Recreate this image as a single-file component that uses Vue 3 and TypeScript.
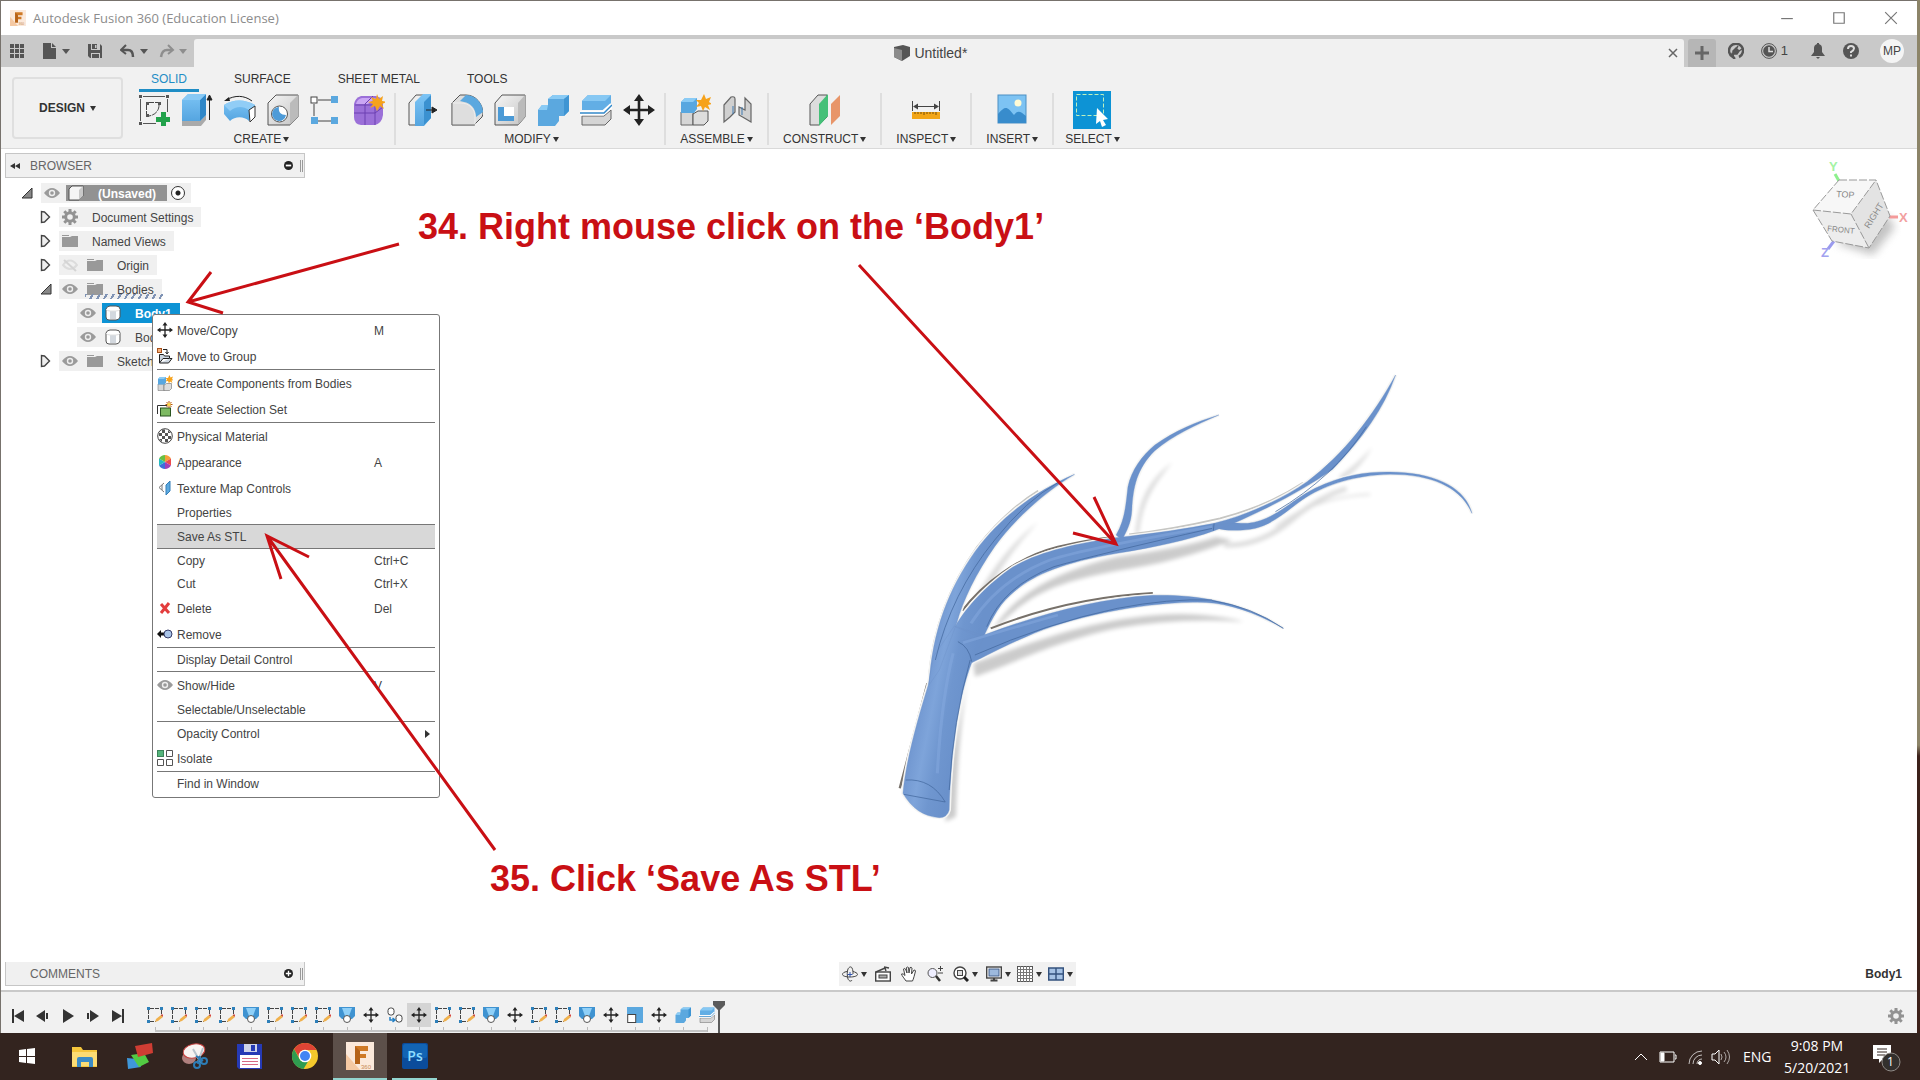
<script setup lang="ts">
import { ref } from 'vue'

interface ToolGroup { label: string; icons: string[]; wide?: boolean }
interface TreeRow { label: string; level: number; arrow?: 'open' | 'closed'; eye?: 'on' | 'off'; icon: string; kind?: 'root' | 'selected' | 'hatched' }
interface MenuRow { label: string; icon?: string; key?: string; sep?: boolean; sub?: boolean; tall?: boolean; active?: boolean }

const tabs = ['SOLID', 'SURFACE', 'SHEET METAL', 'TOOLS']
const activeTab = ref('SOLID')
const workMode = ref('root')

const groups: ToolGroup[] = [
  { label: 'CREATE', icons: ['sketch', 'extrude', 'revolve', 'hole', 'pattern', 'form'], wide: true },
  { label: 'MODIFY', icons: ['press', 'fillet', 'shell', 'combine', 'split', 'move'], wide: true },
  { label: 'ASSEMBLE', icons: ['component', 'joint'] },
  { label: 'CONSTRUCT', icons: ['plane'] },
  { label: 'INSPECT', icons: ['measure'] },
  { label: 'INSERT', icons: ['picture'] },
  { label: 'SELECT', icons: ['select'] },
]

const tree: TreeRow[] = [
  { label: '(Unsaved)', level: 0, arrow: 'open', eye: 'on', icon: 'box', kind: 'root' },
  { label: 'Document Settings', level: 1, arrow: 'closed', icon: 'gear' },
  { label: 'Named Views', level: 1, arrow: 'closed', icon: 'folder' },
  { label: 'Origin', level: 1, arrow: 'closed', eye: 'off', icon: 'folder' },
  { label: 'Bodies', level: 1, arrow: 'open', eye: 'on', icon: 'folder', kind: 'hatched' },
  { label: 'Body1', level: 2, eye: 'on', icon: 'body', kind: 'selected' },
  { label: 'Body2', level: 2, eye: 'on', icon: 'body' },
  { label: 'Sketches', level: 1, arrow: 'closed', eye: 'on', icon: 'folder' },
]

const menu: MenuRow[] = [
  { label: 'Move/Copy', icon: 'move', key: 'M', tall: true },
  { label: 'Move to Group', icon: 'group', tall: true, sep: true },
  { label: 'Create Components from Bodies', icon: 'component', tall: true },
  { label: 'Create Selection Set', icon: 'selset', tall: true, sep: true },
  { label: 'Physical Material', icon: 'material', tall: true },
  { label: 'Appearance', icon: 'wheel', key: 'A', tall: true },
  { label: 'Texture Map Controls', icon: 'texture', tall: true },
  { label: 'Properties', sep: true },
  { label: 'Save As STL', sep: true, active: true },
  { label: 'Copy', key: 'Ctrl+C' },
  { label: 'Cut', key: 'Ctrl+X' },
  { label: 'Delete', icon: 'delete', key: 'Del', tall: true },
  { label: 'Remove', icon: 'remove', tall: true, sep: true },
  { label: 'Display Detail Control', sep: true },
  { label: 'Show/Hide', icon: 'eye', key: 'V', tall: true },
  { label: 'Selectable/Unselectable', sep: true },
  { label: 'Opacity Control', sub: true },
  { label: 'Isolate', icon: 'isolate', tall: true, sep: true },
  { label: 'Find in Window' },
]

const playback = ['first', 'prev', 'play', 'next', 'last']
const timeline = [
  'tsketch', 'tsketch', 'tsketch', 'tsketch', 'loft', 'tsketch', 'tsketch', 'tsketch', 'loft', 'move', 'tcopy', 'move',
  'tsketch', 'tsketch', 'loft', 'move', 'tsketch', 'tsketch', 'loft', 'move', 'scale', 'move', 'combine', 'split',
]
const navTools = [
  { icon: 'orbit', caret: true }, { icon: 'look', caret: false }, { icon: 'hand', caret: false }, { icon: 'zoom', caret: false },
  { icon: 'fit', caret: true }, { icon: 'display', caret: true }, { icon: 'gridset', caret: true }, { icon: 'views', caret: true },
]
const apps = ['start', 'explorer', 'blocks', 'snip', 'floppy', 'chrome', 'fusion', 'ps']
</script>

<template>
  <div class="desktop">
    <svg class="sprite" aria-hidden="true">
      <defs>
        <linearGradient id="gBlue" x1="0" y1="0" x2="0" y2="1"><stop offset="0" stop-color="#7cc4f5" /><stop offset="1" stop-color="#55a5e0" /></linearGradient>
        <linearGradient id="gGrey" x1="0" y1="0" x2="1" y2="1"><stop offset="0" stop-color="#f6f6f6" /><stop offset="1" stop-color="#c4c4c4" /></linearGradient>
        <linearGradient id="gTrunk" gradientUnits="userSpaceOnUse" x1="80" y1="1100" x2="200" y2="1120"><stop offset="0" stop-color="#6f95cf" /><stop offset=".35" stop-color="#7ea4da" /><stop offset=".65" stop-color="#6f96cf" /><stop offset="1" stop-color="#6a91cb" /></linearGradient>
        <symbol id="i-sketch" viewBox="0 0 32 32"><path d="M2.500 5v22M29.500 5v13M5 2.500h22M5 29.500h13" stroke="#555" /><path d="M10 8.500h10M8.500 10v10M21 11c0 6-4 10-10 11" fill="none" stroke="#444" stroke-dasharray="6 1" /><path d="M1 1h3v3H1zM28 1h3v3h-3zM1 28h3v3H1zM8 8h3v3H8zM20 8h3v3h-3zM8 20h3v3H8z" fill="#555" /><path d="M23 18h5v5h5v5h-5v5h-5v-5h-5v-5h5z" fill="#22a24b" /></symbol>
        <symbol id="i-extrude" viewBox="0 0 32 32"><path d="M1 27h18l6-6v5l-5 6H1z" fill="#aaa" /><path d="M1 6l6-6h18v21l-6 6H1z" fill="url(#gBlue)" /><path d="M19 6l6-6v21l-6 6z" fill="#2f87c8" /><path d="M1 6l6-6h18l-6 6z" fill="#88c9f5" /><path d="M28.500 26V3M26 6l2.500-5 2.500 5z" stroke="#222" fill="#222" /></symbol>
        <symbol id="i-revolve" viewBox="0 0 32 32"><path d="M0 11c9-6 21-6 31 0l-1 10-5 6c-5-5-14-5-19 0l-6-7z" fill="url(#gBlue)" /><path d="M0 11c9-6 21-6 31 0l-6 5c-6-4-13-4-19 1z" fill="#91cdf6" /><path d="M25 16l6-4v11l-5 5z" fill="#fff" stroke="#333" /><path d="M28 7C20 1 11 1 2 6" fill="none" stroke="#222" /><path d="M0 7l5-4 1 4z" fill="#222" /></symbol>
        <symbol id="i-hole" viewBox="0 0 32 32"><path d="M1 9l8-8h22v22l-8 8H1z" fill="url(#gGrey)" stroke="#555" /><path d="M23 9l8-8v22l-8 8z" fill="#bbb" /><circle cx="12.500" cy="20" r="8" fill="#fff" stroke="#555" /><path d="M12 13a7 7 0 107 8c-5 0-8-3-7-8z" fill="#4d9bd8" /></symbol>
        <symbol id="i-pattern" viewBox="0 0 32 32"><path d="M8 6h13M4 10v12M8 27h13" stroke="#444" /><rect x="1" y="3" width="6" height="6" fill="#fff" stroke="#444" /><path d="M21 2h7v7h-7zM1 23h7v7H1zM21 23h7v7h-7z" fill="#5ba8df" /></symbol>
        <symbol id="i-form" viewBox="0 0 32 32"><path d="M1 10q1-6 7-8h15q7 2 7 9v10q-1 8-8 10H8q-7-1-7-8z" fill="#9b70d8" /><path d="M3 10q1-5 6-6h14L15 10z" fill="#caa6f4" /><path d="M1 19h21l8-6M12 31V10l8-8M22 10v21M2 11h20l7-5" fill="none" stroke="#6d40b2" /><path d="M24 0l2 5 4-3-1 5 5 1-5 2 2 5-4-3-3 5-2-5-5 2 3-4-5-2 5-1-2-4 5 2z" fill="#f6a21b" /></symbol>
        <symbol id="i-press" viewBox="0 0 32 32"><path d="M1 9l7-8h8v22l-7 8H1z" fill="#eee" stroke="#555" /><path d="M7 8l8-8h8v24l-7 8H7z" fill="url(#gBlue)" /><path d="M16 8l7-7v23l-7 7z" fill="#3b91d0" /><path d="M18 16h8M24 13l5 3-5 3z" fill="#222" stroke="#222" /></symbol>
        <symbol id="i-fillet" viewBox="0 0 32 32"><path d="M1 9l8-8h6c10 0 17 9 17 19l-1 3-8 8H1z" fill="#ddd" stroke="#555" /><path d="M15 1c10 0 17 9 17 17l-7 5c0-9-6-14-12-15L9 7z" fill="#5ba8df" /><path d="M1 9h9c8 0 14 6 14 14v8H1z" fill="#dedede" stroke="#eee" /><path d="M1 9v22h23" fill="none" stroke="#666" /></symbol>
        <symbol id="i-shell" viewBox="0 0 32 32"><path d="M1 9l7-8h23v22l-7 8H1z" fill="url(#gGrey)" stroke="#555" /><path d="M24 9l7-8v22l-7 8z" fill="#bbb" /><rect x="4" y="13" width="16" height="14" fill="#fff" /><path d="M4 13h6v9l-6 5zM10 22h10v5H4z" fill="#4b9ad6" /></symbol>
        <symbol id="i-combine" viewBox="0 0 32 32"><path d="M1 16l4-5h6V5l5-4h16v16l-5 5h-5v5l-4 5H1z" fill="#5ba8df" /><path d="M1 16l4-5h6l-1 5zM11 5l5-4h16l-5 4z" fill="#8acbf5" /><path d="M27 5l5-4v16l-5 5z" fill="#3f95d3" /></symbol>
        <symbol id="i-split" viewBox="0 0 32 32"><path d="M2 22h22l7-6v9l-6 6H2z" fill="#d5d5d5" stroke="#666" /><path d="M2 7l6-6h23v9l-7 6H2z" fill="#62aee5" /><path d="M2 7l6-6h23l-6 6z" fill="#87c8f3" /><path d="M0 19h23l9-8" fill="none" stroke="#fff" stroke-width="5" /><path d="M0 19h24l8-8" fill="none" stroke="#3489c9" stroke-width="1.500" /></symbol>
        <symbol id="i-move" viewBox="0 0 32 32"><path d="M16 5v22M5 16h22" stroke="#222" stroke-width="2.600" /><path d="M16 0l5 7H11zM16 32l5-7H11zM0 16l7-5v10zM32 16l-7-5v10z" fill="#222" /></symbol>
        <symbol id="i-component" viewBox="0 0 32 32"><path d="M2 18h12v13H2z" fill="#d6d6d6" stroke="#666" /><path d="M14 20l5-3h10v10l-4 4H14z" fill="#ddd" stroke="#555" /><path d="M2 8l4-4h12v11l-3 4H2z" fill="#58a7e0" /><path d="M2 8l4-4h12l-4 4z" fill="#8acbf5" /><path d="M25 0l2 5 5-2-2 5 3 2-4 1 2 5-5-3-2 4-2-5-5 1 3-4-3-3 5 0z" fill="#f6a21b" /></symbol>
        <symbol id="i-joint" viewBox="0 0 32 32"><path d="M2 11l7-8q4-1 4 2v13l-5 5-6 5zM29 28l-5-3-7-4V13l6 3V4l6 6z" fill="#d0d0d0" stroke="#666" stroke-width="1.200" /><path d="M11 12v8M20 13v8" stroke="#3c78b0" /></symbol>
        <symbol id="i-plane" viewBox="0 0 32 32"><path d="M1 10l8-9h9v22l-8 8H1z" fill="#ddd" stroke="#555" /><path d="M10 10l9-10v22l-9 10z" fill="#45c078" /><path d="M22 10l9-9v21l-9 9z" fill="#e89569" /></symbol>
        <symbol id="i-measure" viewBox="0 0 32 32"><path d="M2.500 7v10M29.500 7v10M4 12.500h24" stroke="#444" /><path d="M3 12.500l5-3v6zM29 12.500l-5-3v6z" fill="#444" /><rect x="2" y="18" width="28" height="7" fill="#f2a516" /><path d="M5 18v2M8 18v2M11 18v2M14 18v3M17 18v2M20 18v2M23 18v2M26 18v3" stroke="#754c05" /></symbol>
        <symbol id="i-picture" viewBox="0 0 32 32"><rect x="2" y="1" width="28" height="28" fill="#7dc3f3" stroke="#4c90c3" /><path d="M2 20c8-9 9-7 16 1 4-5 6-4 12 1v7H2z" fill="#388ccc" /><circle cx="22" cy="9" r="3.500" fill="#fffbd5" /></symbol>
        <symbol id="i-select" viewBox="0 0 38 38"><rect width="38" height="38" fill="#0d93d5" /><rect x="3.500" y="3.500" width="27" height="21" fill="none" stroke="#bff0bd" stroke-dasharray="4 2" /><path d="M24 17l11 11-5 1 3 5-4 2-2-6-4 3z" fill="#fff" /></symbol>
        <symbol id="i-eye" viewBox="0 0 16 16"><path d="M0 8q8-10 16 0-8 10-16 0z" fill="#9b9b9b" /><circle cx="8" cy="8" r="3.200" fill="#eee" /><circle cx="8" cy="8" r="1.800" fill="#999" /></symbol>
        <symbol id="i-eyeoff" viewBox="0 0 16 16"><path d="M1 8q7-9 14 0-7 8-14 0z" fill="none" stroke="#dcdcdc" stroke-width="2" /><path d="M2 3l12 11" stroke="#d4d4d4" stroke-width="2" /></symbol>
        <symbol id="i-box" viewBox="0 0 16 16"><path d="M1 4l3-3h11v10l-4 4H1z" fill="#f5f5f5" stroke="#555" /><path d="M11 5l4-4v10l-4 4z" fill="#c9c9c9" /></symbol>
        <symbol id="i-gear" viewBox="0 0 16 16"><circle cx="8" cy="8" r="4.300" fill="none" stroke="#929292" stroke-width="3" /><path d="M8 0v3M8 13v3M0 8h3M13 8h3M2.300 2.300l2 2M11.700 11.700l2 2M13.700 2.300l-2 2M4.300 11.700l-2 2" stroke="#929292" stroke-width="3" /></symbol>
        <symbol id="i-folder" viewBox="0 0 16 16"><path d="M0 2h7v1H0zM0 4h8l2-1h6v11H0z" fill="#999" /></symbol>
        <symbol id="i-body" viewBox="0 0 16 16"><path d="M1 4q1-3 4-3h6q4 0 4 3v8q-1 3-4 3H4q-3 0-3-3z" fill="#fff" stroke="#555" /><path d="M5 6h6v8H5z" fill="#d3d8de" /><path d="M1 4q1 2 4 2h6q3 0 4-2" fill="none" stroke="#e0e0e0" /></symbol>
        <symbol id="i-group" viewBox="0 0 16 16"><rect x="0.500" y="0.500" width="4" height="4" fill="#f6b17a" stroke="#a8501a" /><path d="M6 1.500h4V5M8.500 4L10 6l1.500-2" fill="none" stroke="#222" /><path d="M2.500 15V6.500h4l1 1.500h5v2.500H6L2.500 15h9L15 10.500h-2" fill="#cdd6e0" stroke="#222" /></symbol>
        <symbol id="i-selset" viewBox="0 0 16 16"><path d="M.5 13V4.500H10" fill="none" stroke="#333" /><rect x="3.500" y="7" width="10" height="8" fill="#7dba62" stroke="#2a5520" /><path d="M12 0v7M8.500 3.500h7M9.500 1l5 5M14.500 1l-5 5" stroke="#b5540e" /><circle cx="12" cy="3.500" r="1.700" fill="#f9d64a" /></symbol>
        <symbol id="i-material" viewBox="0 0 16 16"><circle cx="8" cy="8" r="7.300" fill="#fff" stroke="#444" /><path d="M5 1.500h3V5H5zM2 5h3v3H2zM8 5h3v3H8zM5 8h3v3H5zM11 8h3v3h-3zM8 11h3v3H8zM11 2l3 3h-3zM2 11h3v3z" fill="#555" /></symbol>
        <symbol id="i-wheel" viewBox="0 0 16 16"><path d="M8 8V1a7 7 0 016 3.500z" fill="#f6a03b" /><path d="M8 8l6-3.500v7z" fill="#ed4c4c" /><path d="M8 8l6 3.500A7 7 0 018 15z" fill="#a13fb8" /><path d="M8 8v7a7 7 0 01-6-3.500z" fill="#3d6fdb" /><path d="M8 8l-6 3.500v-7z" fill="#26bcc0" /><path d="M8 8L2 4.500A7 7 0 018 1z" fill="#69c043" /></symbol>
        <symbol id="i-texture" viewBox="0 0 16 16"><path d="M9 5l4-4v10l-4 4z" fill="#5ba8df" stroke="#347fb8" /><path d="M7 3L2 7.500 7 12M5 5v5" fill="none" stroke="#777" /></symbol>
        <symbol id="i-delete" viewBox="0 0 16 16"><path d="M4 4l8 9M12 3l-8 10" stroke="#e33d3d" stroke-width="3" /></symbol>
        <symbol id="i-remove" viewBox="0 0 16 16"><path d="M0 8l4-4v2.500h3v3H4V12z" fill="#111" /><circle cx="11" cy="8" r="4" fill="#a9c4e8" stroke="#333a66" /></symbol>
        <symbol id="i-isolate" viewBox="0 0 16 16"><rect x=".5" y=".5" width="6" height="6" fill="#55b57b" stroke="#3b8359" /><path d="M9.500.5h6v6h-6zM.5 9.500h6v6h-6zM9.500 9.500h6v6h-6z" fill="#fff" stroke="#555" /></symbol>
        <symbol id="i-tsketch" viewBox="0 0 16 16"><path d="M3 1.500h10M1.500 3v10M14.500 3v6M3 14.500h6" stroke="#444" stroke-dasharray="4 1" /><path d="M0 0h3v3H0zM13 0h3v3h-3zM0 13h3v3H0z" fill="#2d7fb9" /><path d="M8 15l1-3 5-4 2 2-5 4z" fill="#f0b14d" /><path d="M14 8l1-1 2 2-1 1z" fill="#d64343" /></symbol>
        <symbol id="i-loft" viewBox="0 0 16 16"><path d="M0 0h16v9l-3 3H3L0 9z" fill="#3f93d1" /><path d="M3 1h10l-3 8H6z" fill="#8fd0f8" /><circle cx="8" cy="12" r="3.500" fill="#fff" stroke="#555" /></symbol>
        <symbol id="i-tcopy" viewBox="0 0 16 16"><rect x="1" y="1" width="6" height="7" rx="2.500" fill="#fff" stroke="#444" /><rect x="9" y="8" width="6" height="7" rx="2.500" fill="#fff" stroke="#444" /><path d="M3 10v3h4M5.500 11L8 13l-2.500 2" fill="none" stroke="#2380c5" stroke-width="1.500" /></symbol>
        <symbol id="i-scale" viewBox="0 0 16 16"><path d="M0 0h16v16H9V7H0z" fill="#5ba8df" /><rect x=".7" y="7.500" width="8" height="8" fill="#fff" stroke="#444" /></symbol>
        <symbol id="i-first" viewBox="0 0 16 16"><path d="M2 1h2v14H2zM14 2v12L4 8z" fill="#333" /></symbol>
        <symbol id="i-prev" viewBox="0 0 16 16"><path d="M10 2v12L1 8zM11 5h2v6h-2z" fill="#333" /></symbol>
        <symbol id="i-play" viewBox="0 0 16 16"><path d="M3 1v14l11-7z" fill="#333" /></symbol>
        <symbol id="i-next" viewBox="0 0 16 16"><path d="M5 2v12l9-6zM2 5h2v6H2z" fill="#333" /></symbol>
        <symbol id="i-last" viewBox="0 0 16 16"><path d="M12 1h2v14h-2zM2 2v12l10-6z" fill="#333" /></symbol>
        <symbol id="i-orbit" viewBox="0 0 16 16"><path d="M5 5.500C2 6 .5 7 .5 8.500S4 11 8 11s7.500-1 7.500-2.500S13 6 11 5.500" fill="none" stroke="#444" /><path d="M10 14c-1 2-3 1-4-1-1-3-1-8 0-10s3-3 4-1 1 4 1 6" fill="none" stroke="#444" /><path d="M8 6v5M5.500 8.500h5" stroke="#3355aa" /></symbol>
        <symbol id="i-look" viewBox="0 0 16 16"><rect x=".7" y="6" width="14.600" height="9" fill="#fff" stroke="#444" stroke-width="1.400" /><rect x="4" y="9" width="8" height="3" fill="#aaa" stroke="#444" /><path d="M1 6l9-4 1 3M9 1l5 1" fill="none" stroke="#444" stroke-width="1.400" /></symbol>
        <symbol id="i-hand" viewBox="0 0 16 16"><path d="M5 15C3 12 1 10 .5 8q1.500-1 3.500 1.500L2.500 3q1.500-1 2 0L6 7 5.500 1.500q1.500-1 2 0L8 7l1-5.500q1.500-.5 2 .5L10.500 8 13 4q1.500 0 1.500 1c-1 4-2 8-3 10z" fill="#fff" stroke="#444" /></symbol>
        <symbol id="i-zoom" viewBox="0 0 16 16"><circle cx="5.500" cy="7" r="4.500" fill="#eef" stroke="#555" /><path d="M9 10l4 5" stroke="#333" stroke-width="2.500" /><path d="M13.500 0v5M11 2.500h5M11 7h5" stroke="#444" /></symbol>
        <symbol id="i-fit" viewBox="0 0 16 16"><circle cx="7" cy="7" r="6" fill="#fff" stroke="#444" stroke-width="1.400" /><rect x="4.500" y="4.500" width="5" height="5" fill="#ddd" stroke="#444" /><path d="M11 11l4 4" stroke="#222" stroke-width="3" /></symbol>
        <symbol id="i-display" viewBox="0 0 16 16"><rect x=".7" y="1" width="14.600" height="11" fill="#fff" stroke="#444" stroke-width="1.400" /><rect x="3" y="3" width="10" height="7" fill="#9db9dd" stroke="#44618c" /><path d="M8 12v2M4.500 14.500h7" stroke="#444" stroke-width="2" /></symbol>
        <symbol id="i-gridset" viewBox="0 0 16 16"><rect x=".5" y=".5" width="15" height="15" fill="#fff" stroke="#555" /><path d="M3.500 0v16M6.500 0v16M9.500 0v16M12.500 0v16M0 3.500h16M0 6.500h16M0 9.500h16M0 12.500h16" stroke="#777" /></symbol>
        <symbol id="i-views" viewBox="0 0 16 16"><path d="M.7 2h14.600v12H.7zM8 2v12M1 8h14" fill="#a5c2e5" stroke="#33517d" stroke-width="1.400" /></symbol>
        <symbol id="i-start" viewBox="0 0 28 28"><path d="M6 8l7-1v7H6zM14 7l8-1v8h-8zM6 15h7v6l-7-1zM14 15h8v7l-8-1z" fill="#fff" /></symbol>
        <symbol id="i-explorer" viewBox="0 0 28 28"><path d="M1 5h9l2 3h14v17H1z" fill="#f5c63c" /><path d="M1 10h25v14H1z" fill="#fbdc74" /><path d="M6 25v-8q0-2 2-2h12q2 0 2 2v8h-4v-5h-8v5z" fill="#3b8cc6" /></symbol>
        <symbol id="i-blocks" viewBox="0 0 28 28"><path d="M1 16l10 1 4 8-13 2z" fill="#3f97d9" /><path d="M5 13l13-2 5 9-10 5z" fill="#53cb43" /><path d="M9 4l17-3 1 10-15 4z" fill="#cf3d33" /></symbol>
        <symbol id="i-snip" viewBox="0 0 28 28"><ellipse cx="8" cy="16" rx="7" ry="6" fill="#b0807e" /><ellipse cx="13" cy="9" rx="11" ry="7" fill="#f7f4f2" stroke="#c64340" transform="rotate(-12 13 9)" /><path d="M12 7l8 14M22 6l-5 14" stroke="#b9c4cc" stroke-width="2" /><path d="M15 14l7 5M19 14l-2 8" stroke="#2c7cb5" stroke-width="2" /><circle cx="16" cy="23" r="3" fill="none" stroke="#2c7cb5" stroke-width="2" /><circle cx="23" cy="19" r="3" fill="none" stroke="#2c7cb5" stroke-width="2" /></symbol>
        <symbol id="i-floppy" viewBox="0 0 28 28"><path d="M1 2h25v25H3l-2-2z" fill="#263ab5" /><path d="M8 2h13v8H8z" fill="#ced3e8" /><path d="M15 3h4v6h-4z" fill="#263ab5" /><path d="M4 13h20v13H4z" fill="#fff" /><path d="M6 16.500h16M6 19.500h16M6 22.500h16" stroke="#d76a83" /></symbol>
        <symbol id="i-chrome" viewBox="0 0 28 28"><circle cx="14" cy="14" r="13" fill="#f5c92c" /><path d="M3 7a13 13 0 0122.500 1H14a6 6 0 00-5.500 8z" fill="#de4435" /><path d="M3 7a13 13 0 009.500 20l6-10a6 6 0 01-10 0z" fill="#2f9c50" /><circle cx="14" cy="14" r="6.300" fill="#fff" /><circle cx="14" cy="14" r="5" fill="#4285f4" /></symbol>
        <symbol id="i-fusion" viewBox="0 0 28 28"><rect width="28" height="28" fill="#fbe9db" /><path d="M0 28V12l14 16z" fill="#f5c9a3" /><path d="M9 22V4h13v5h-8v3h6v4h-6v6z" fill="#cf7a26" /><path d="M9 4l5 5v13H9z" fill="#b5631a" /><text x="15" y="27" font-family="Liberation Sans, sans-serif" font-size="6" fill="#c98a55">360</text></symbol>
        <symbol id="i-ps" viewBox="0 0 28 28"><rect x="1" y="1" width="26" height="26" rx="2" fill="#0b4c9b" /><rect x="2" y="2" width="24" height="14" rx="2" fill="#1874c5" opacity=".6" /><text x="14" y="19" text-anchor="middle" font-family="Open Sans, sans-serif" font-size="14" font-weight="600" fill="#8fdcff">Ps</text></symbol>
      </defs>
    </svg>

    <div class="window">
      <header class="titlebar">
        <svg class="logo"><use href="#i-fusion" /></svg>
        <h1>Autodesk Fusion 360 (Education License)</h1>
        <div class="win-buttons">
          <button aria-label="Minimize"><svg viewBox="0 0 12 12"><path d="M1 6.500h10" /></svg></button>
          <button aria-label="Maximize"><svg viewBox="0 0 12 12"><path d="M1.500 1.500h9v9h-9z" /></svg></button>
          <button aria-label="Close"><svg viewBox="0 0 12 12"><path d="M1 1l10 10M11 1L1 11" /></svg></button>
        </div>
      </header>

      <div class="quickbar">
        <div class="quick-left">
          <button aria-label="Data panel"><svg class="q16" viewBox="0 0 16 16"><path d="M1 1h4v4H1zM6 1h4v4H6zM11 1h4v4h-4zM1 6h4v4H1zM6 6h4v4H6zM11 6h4v4h-4zM1 11h4v4H1zM6 11h4v4H6zM11 11h4v4h-4z" /></svg></button>
          <button class="with-caret" aria-label="File"><svg class="q16" viewBox="0 0 16 16"><path d="M1 0h8v5h5v11H1zM10 0l4 4h-4z" /></svg><i class="caret big"></i></button>
          <button aria-label="Save"><svg class="q16" viewBox="0 0 16 16"><path d="M1 1h3v6h9V1l2 2v12h-2v-5H4v5H3l-2-2zM5 1h5v5H5zM5 11h7v4H5z" fill-rule="evenodd" /><path d="M8 2h1.500v3H8z" fill="#c9c9c9" /></svg></button>
          <button class="with-caret" aria-label="Undo"><svg class="q16" viewBox="0 0 16 16"><path d="M6 2L1 7l5 4" fill="none" stroke="#555" stroke-width="2" /><path d="M2 7h6q5 0 5 7" fill="none" stroke="#555" stroke-width="2.500" /></svg><i class="caret big"></i></button>
          <button class="with-caret dim" aria-label="Redo"><svg class="q16" viewBox="0 0 16 16"><path d="M9 2l5 5-5 4" fill="none" stroke="#555" stroke-width="2" /><path d="M13 7H8q-5 0-6 7" fill="none" stroke="#555" stroke-width="2.500" /></svg><i class="caret big"></i></button>
        </div>
        <div class="doc-tab">
          <span class="doc-title"><svg class="q16" viewBox="0 0 16 16"><path d="M0 2l9-2 7 2v9l-8 5-8-4z" fill="#555" /><path d="M0 3l8 2v11l-8-4z" fill="#8b8b8b" /></svg>Untitled*</span>
          <button aria-label="Close document"><svg viewBox="0 0 10 10"><path d="M1 1l8 8M9 1L1 9" stroke="#666" stroke-width="1.500" /></svg></button>
        </div>
        <button class="new-tab" aria-label="New document"><svg viewBox="0 0 14 14"><path d="M7 0v14M0 7h14" stroke="#666" stroke-width="3" /></svg></button>
        <div class="quick-right">
          <button aria-label="Extensions"><svg class="q16" viewBox="0 0 16 16"><path d="M5 14a7 7 0 116 0M5 10c-2 3 1 5 2 6" fill="none" stroke="#555" stroke-width="2.500" /><path d="M5 12V8l3-3 3 3-2 3H6zM8 6l2-3M11 8l3-2" fill="#555" stroke="#555" stroke-width="1.500" /></svg></button>
          <button class="jobs" aria-label="Job status"><svg class="q16" viewBox="0 0 16 16"><circle cx="8" cy="8" r="7.400" fill="none" stroke="#555" /><circle cx="8" cy="8" r="5.800" /><path d="M8 4v4.500h4" fill="none" stroke="#ddd" stroke-width="1.500" /></svg>1</button>
          <button aria-label="Notifications"><svg class="q16" viewBox="0 0 16 16"><path d="M1 13l3-4V5q0-3 3-4V0h2v1q3 1 3 4v4l3 4zM6 14h4l-2 2z" /></svg></button>
          <button aria-label="Help"><svg class="q16" viewBox="0 0 16 16"><circle cx="8" cy="8" r="8" /><path d="M5 6q0-3 3-3t3 2.500Q11 7 8 9v1M8 11.500v2" fill="none" stroke="#ddd" stroke-width="2" /></svg></button>
          <button class="avatar">MP</button>
        </div>
      </div>

      <div class="ribbon">
        <button class="workspace">DESIGN <i class="caret"></i></button>
        <div class="ribbon-main">
          <nav class="tabs">
            <button v-for="t in tabs" :key="t" :class="{ on: t === activeTab }" @click="activeTab = t">{{ t }}</button>
          </nav>
          <div class="groups">
            <section v-for="g in groups" :key="g.label" class="group" :class="{ wide: g.wide }">
              <div class="tools">
                <button v-for="i in g.icons" :key="i" :aria-label="i"><svg :class="i === 'select' ? 's38' : 's32'"><use :href="'#i-' + i" /></svg></button>
              </div>
              <button class="group-label">{{ g.label }} <i class="caret"></i></button>
            </section>
          </div>
        </div>
      </div>

      <main class="canvas">
        <aside class="browser">
          <div class="panel-head">
            <svg class="rew" viewBox="0 0 10 8"><path d="M5 1v6L0 4zM10 1v6L5 4z" fill="#333" /></svg>
            <span>BROWSER</span>
            <button aria-label="Collapse"><svg viewBox="0 0 10 10"><circle cx="5" cy="5" r="5" fill="#222" /><path d="M2 5h6" stroke="#fff" stroke-width="2" /></svg></button>
          </div>
          <ul class="tree">
            <li v-for="r in tree" :key="r.label" :class="['lv' + r.level, r.kind]">
              <svg v-if="r.arrow" class="arrow" viewBox="0 0 12 14">
                <path v-if="r.arrow === 'open'" d="M11 2v10H1z" fill="#888" stroke="#333" />
                <path v-else d="M1.500 1.500v11l3-.5 5-5-5-5z" fill="#eee" stroke="#444" stroke-width="1.400" />
              </svg>
              <div class="pill">
                <svg v-if="r.eye" class="ic eye"><use :href="r.eye === 'on' ? '#i-eye' : '#i-eyeoff'" /></svg>
                <span class="node"><svg class="ic"><use :href="'#i-' + r.icon" /></svg><span class="name">{{ r.label }}</span></span>
                <input v-if="r.kind === 'root'" v-model="workMode" type="radio" value="root" aria-label="Activate component">
              </div>
            </li>
          </ul>
        </aside>

        <div class="canvas-foot">
          <div class="panel-head comments">
            <span>COMMENTS</span>
            <button aria-label="Expand"><svg viewBox="0 0 10 10"><circle cx="5" cy="5" r="5" fill="#222" /><path d="M2 5h6M5 2v6" stroke="#fff" stroke-width="1.500" /></svg></button>
          </div>
          <div class="navbar">
            <button v-for="n in navTools" :key="n.icon" :aria-label="n.icon"><svg class="ic"><use :href="'#i-' + n.icon" /></svg><i v-if="n.caret" class="caret"></i></button>
          </div>
          <strong class="status">Body1</strong>
        </div>

        <svg class="model" viewBox="0 0 1568 1410" preserveAspectRatio="none">
          <defs>
            <filter id="soft"><feGaussianBlur stdDeviation="6" /></filter>
            <g id="branches">
              <path d="M124 975C132 810 175 685 240 575C308 465 400 390 492 343C415 398 340 478 290 560C243 640 210 720 194 790L150 930Z" />
              <path d="M597 525C620 480 622 430 627 380C636 330 662 288 695 255C745 213 800 185 857 165C800 194 740 227 695 272C650 325 640 380 637 450C635 490 625 510 612 540Z" />
              <path d="M843 500C880 485 900 490 930 490C1000 480 1040 420 1100 385C1170 345 1230 335 1290 336C1400 337 1480 380 1497 460C1470 385 1400 343 1290 343C1200 345 1130 375 1080 410C1040 440 1000 490 950 505C910 515 860 512 843 500Z" />
              <path d="M190 800C218 740 275 670 335 622C400 575 500 550 590 534C700 520 780 505 845 490C930 465 1020 415 1080 365C1175 280 1245 170 1304 45C1275 145 1220 235 1145 328C1060 400 960 455 895 490L845 512C780 540 700 560 600 580C450 610 380 650 330 705C295 740 275 800 260 835Z" />
              <path d="M135 890L188 798L265 828L232 908C195 1020 178 1200 175 1350Q170 1373 150 1373C110 1370 80 1345 58 1300C65 1200 100 1060 122 975Z" />
              <path d="M197 845L270 822C400 765 550 715 690 706C800 703 920 725 1020 805C930 745 860 724 790 727C650 730 480 772 370 830C310 860 265 890 232 908C230 880 215 860 197 845Z" />
            </g>
          </defs>
          <g opacity=".2" filter="url(#soft)">
            <path d="M285 810C330 720 420 640 600 590C720 570 800 550 850 530L890 540C800 585 700 615 600 632C470 662 390 690 310 785Z" />
            <path d="M236 910C400 840 560 765 760 762Q860 765 920 785Q750 772 600 805C440 845 340 910 240 950Z" />
            <path d="M230 910C205 1050 195 1230 192 1370L165 1385L180 1200Z" />
          </g>
          <g opacity=".14" filter="url(#soft)">
            <path d="M645 520C655 430 670 370 740 305C690 380 665 420 655 520ZM235 730Q300 580 400 485Q310 600 255 730ZM1160 350Q1210 310 1245 260Q1220 320 1170 360Z" />
            <path d="M870 555Q960 560 1040 480Q1110 410 1180 385" fill="none" stroke="#000" stroke-width="14" />
            <path d="M1000 500Q1100 410 1240 403" fill="none" stroke="#000" stroke-width="5" />
          </g>
          <path d="M208 752C260 670 350 590 450 560Q530 539 585 532M280 805Q480 712 690 699M50 1285L120 970" fill="none" stroke="#77716a" stroke-width="6" />
          <path d="M630 523Q740 508 860 475Q980 438 1070 368M124 950C134 800 180 670 246 560Q320 450 400 392" fill="none" stroke="#c6c6c3" stroke-width="5" />
          <use href="#branches" fill="#fff" stroke="#f6f6f4" stroke-width="9" />
          <use href="#branches" fill="url(#gTrunk)" />
          <use href="#branches" fill="none" stroke="#6c90c8" stroke-width="1" />
          <g fill="none" stroke="#86aadf" stroke-width="8" opacity=".5">
            <path d="M145 1240Q155 1020 185 880M230 790Q300 660 430 600Q520 565 840 500M210 848Q330 805 450 765" />
          </g>
          <g fill="none" stroke="#42679d" stroke-width="2">
            <path d="M65 1260Q130 1255 165 1326L60 1303M175 1290Q185 1080 228 900M197 845Q225 860 232 905M270 800Q310 680 440 620Q560 580 840 505M845 490L843 512M240 885Q420 790 600 745Q730 715 840 720M1000 455Q1150 350 1230 200M840 722Q940 740 1020 805M140 900Q180 700 290 540Q370 420 450 368" />
          </g>
        </svg>

        <svg class="viewcube" viewBox="1800 155 115 115">
          <defs><filter id="cubeSoft"><feGaussianBlur stdDeviation="4" /></filter></defs>
          <path d="M1835 243l38 12 22-28-8-12-40 23z" fill="#888" opacity=".5" filter="url(#cubeSoft)" />
          <path d="M1835 174l4 7" stroke="#8df08d" stroke-width="3" /><path d="M1889 217h9" stroke="#f49a9a" stroke-width="3" /><path d="M1834 241l-6 8" stroke="#9a9aee" stroke-width="3" />
          <path d="M1839 180l37 0-25 34-38-4z" fill="#f7f7f7" /><path d="M1813 210l38 4 18 34-37-7z" fill="#ededed" /><path d="M1876 180l14 36-21 32-18-34z" fill="#e3e3e3" />
          <path d="M1839 180h37l14 36-21 32-37-7-19-31zM1813 210l38 4 25-34M1851 214l18 34" fill="none" stroke="#999" stroke-dasharray="8 2" />
          <g font-family="Liberation Sans, Arial, sans-serif" font-size="9" fill="#888">
            <text x="1836" y="197" transform="rotate(4 1836 197)">TOP</text>
            <text x="1827" y="231" font-size="8" transform="rotate(6 1827 231)">FRONT</text>
            <text x="1869" y="229" transform="rotate(-58 1869 229)">RIGHT</text>
          </g>
          <g font-family="Liberation Sans, Arial, sans-serif" font-size="13" font-weight="700"><text x="1829" y="171" fill="#a4f3a4">Y</text><text x="1899" y="222" fill="#f2a0a0">X</text><text x="1821" y="257" fill="#a2a2ef">Z</text></g>
        </svg>

        <menu class="context">
          <li v-for="m in menu" :key="m.label" :class="{ sep: m.sep, tall: m.tall, active: m.active }">
            <button>
              <svg class="ic"><use v-if="m.icon" :href="'#i-' + m.icon" /></svg>
              <span class="label">{{ m.label }}</span>
              <span class="key">{{ m.key }}</span>
              <svg v-if="m.sub" class="sub" viewBox="0 0 5 8"><path d="M0 0v8l5-4z" fill="#333" /></svg>
            </button>
          </li>
        </menu>

        <svg class="notes">
          <g fill="none" stroke="#c90f14" stroke-width="3">
            <path d="M398 95L187 153M210 123L187 153L222 164" />
            <path d="M858 116L1115 395M1093 348L1115 395L1072 384" />
            <path d="M494 701L266 387M308 408L266 387L280 430" />
          </g>
        </svg>
        <p class="note first">34. Right mouse click on the ‘Body1’</p>
        <p class="note second">35. Click ‘Save As STL’</p>
      </main>

      <footer class="timeline">
        <div class="playback">
          <button v-for="p in playback" :key="p" :aria-label="p"><svg class="ic"><use :href="'#i-' + p" /></svg></button>
        </div>
        <ol class="features">
          <li v-for="(f, n) in timeline" :key="n" :class="{ picked: n === 11 }"><button :aria-label="f"><svg class="ic"><use :href="'#i-' + f" /></svg></button></li>
        </ol>
        <svg class="marker" viewBox="0 0 12 32"><path d="M0 0h12v4L7 9v23H5V9L0 4z" fill="#5b5b5b" /></svg>
        <button class="prefs" aria-label="Preferences"><svg class="ic"><use href="#i-gear" /></svg></button>
      </footer>
    </div>

    <div class="taskbar">
      <button v-for="a in apps" :key="a" :class="['app', a]" :aria-label="a"><svg class="s28"><use :href="'#i-' + a" /></svg></button>
      <div class="tray">
        <svg class="t-chev" viewBox="0 0 14 8"><path d="M1 7l6-6 6 6" /></svg>
        <svg class="t-bat" viewBox="0 0 18 12"><path d="M1 1h14v10H1zM16 4h1v4h-1" /><path d="M2 2h3v8H2z" fill="#fff" /></svg>
        <svg class="t-wifi" viewBox="0 0 16 16"><path d="M2 15A13 13 0 0115 2M6 15a9 9 0 019-9M10 15a5 5 0 015-5" opacity=".7" /><circle cx="13" cy="14" r="1.500" fill="#fff" /></svg>
        <svg class="t-vol" viewBox="0 0 20 16"><path d="M1 5h3l4-4v14l-4-4H1z" /><path d="M10 5q2 3 0 6M13 3q4 5 0 10M16 1q5 7 0 14" opacity=".6" /></svg>
        <span class="lang">ENG</span>
        <time>9:08 PM<br>5/20/2021</time>
        <button class="inbox" aria-label="Action center"><svg viewBox="0 0 30 30"><path d="M1 3h18v14h-8l-4 4v-4H1z" fill="#fff" /><path d="M5 7h10M5 10h10M5 13h8" stroke="#33241f" /><circle cx="19" cy="20" r="9" fill="#33302d" stroke="#8f8a86" /></svg><span>1</span></button>
      </div>
    </div>
  </div>
</template>

<style>
body { margin: 0; }
</style>

<style scoped>
.desktop { min-height: 100vh; display: flex; flex-direction: column; background: linear-gradient(#8c8468 0, #8c8468 69%, #3c211a 70%); font: 12px/16px "Liberation Sans", Arial, sans-serif; color: #444; }
.sprite { position: absolute; width: 0; height: 0; }
button { border: 0; padding: 0; margin: 0; background: none; font: inherit; color: inherit; display: flex; align-items: center; }
svg { display: block; flex: none; }
ul, ol, menu, p, h1 { margin: 0; padding: 0; list-style: none; }
.window { flex: 1; display: flex; flex-direction: column; margin-right: 3px; border-left: 1px solid #77726c; border-top: 1px solid #77726c; background: #fff; }
.ic { width: 16px; height: 16px; }
.s32 { width: 32px; height: 32px; }
.s38 { width: 38px; height: 38px; }
.s28 { width: 28px; height: 28px; }
.q16 { width: 16px; height: 16px; fill: #555; }
.caret { border: 3px solid transparent; border-top: 5px solid #333; border-bottom: 0; }
.caret.big { border-width: 5px 4px 0; border-top-color: #555; }

.titlebar { height: 34px; display: flex; align-items: center; padding: 0 19px 0 9px; box-sizing: border-box; }
.logo { width: 16px; height: 16px; }
.titlebar h1 { flex: 1; margin-left: 7px; font: 400 13px/20px "Open Sans", "Noto Sans", sans-serif; color: #8c8c8c; }
.win-buttons { display: flex; gap: 38px; }
.win-buttons svg { width: 14px; height: 14px; fill: none; stroke: #777; }

.quickbar { height: 32px; display: flex; background: #c9c9c9; align-items: flex-end; }
.quick-left { width: 193px; height: 32px; display: flex; align-items: center; gap: 17px; padding-left: 8px; box-sizing: border-box; }
.quick-left .with-caret { gap: 4px; }
.dim { opacity: .5; }
.quick-left .dim { margin-left: -6px; }
.doc-tab { flex: 1; height: 28px; display: flex; align-items: center; background: #f1f1f1; border-radius: 3px 3px 0 0; padding-right: 6px; }
.doc-tab button svg { width: 10px; height: 10px; }
.doc-title { flex: 1; display: flex; justify-content: center; align-items: center; gap: 4px; font-size: 14px; }
.new-tab { width: 28px; height: 28px; margin-left: 4px; background: #b6b6b6; justify-content: center; border-radius: 3px 3px 0 0; }
.new-tab svg { width: 14px; height: 14px; }
.quick-right { height: 32px; display: flex; align-items: center; gap: 17px; padding: 0 13px 0 12px; }
.jobs { gap: 4px; font-size: 13px; margin-right: 5px; }
.avatar { width: 24px; height: 24px; margin-left: 4px; border-radius: 50%; background: #f4f4f4; justify-content: center; }

.ribbon { height: 81px; display: flex; background: #f1f1f1; border-bottom: 1px solid #d9d9d9; }
.workspace { width: 111px; height: 62px; margin: 10px 3px 0 11px; border: 2px solid #dfdfdf; border-radius: 4px; box-sizing: border-box; justify-content: center; gap: 5px; font-weight: 700; color: #333; }
.tabs { display: flex; gap: 23px; padding-left: 13px; }
.tabs button { height: 25px; padding: 2px 12px 0; border-bottom: 3px solid transparent; box-sizing: border-box; white-space: nowrap; color: #333; }
.tabs .on { color: #1f8dc5; border-color: #1f8dc5; }
.groups { display: flex; }
.group { padding: 0 13px; border-right: 2px solid #dedede; height: 52px; margin-top: 1px; }
.group:nth-child(n+4) { padding: 0 14px; }
.group:last-child { border: 0; padding: 0 11px; }
.group.wide { padding: 0 9px 0 12px; }
.tools { display: flex; gap: 11px; justify-content: center; height: 34px; align-items: center; }
.group-label { margin: 4px auto 0; gap: 2px; color: #333; white-space: nowrap; line-height: 16px; }

.canvas { flex: 1; min-height: 700px; position: relative; overflow: hidden; display: flex; flex-direction: column; justify-content: space-between; background: #fff; }
.browser { padding: 4px 0 0 4px; }
.panel-head { width: 300px; height: 25px; box-sizing: border-box; display: flex; align-items: center; background: #f0f0f0; border: 1px solid #c6c6c6; color: #666; padding: 0 10px 0 4px; }
.panel-head span { flex: 1; margin-left: 10px; }
.panel-head .rew { width: 10px; height: 8px; }
.panel-head button svg { width: 9px; height: 9px; }
.panel-head::after { content: ""; width: 1px; height: 12px; border-left: 1px solid #999; border-right: 1px solid #999; margin: 0 -9px 0 7px; }
.comments { border-top: 0; height: 24px; }
.comments span { margin-left: 20px; }
.tree { display: flex; flex-direction: column; gap: 4px; padding-top: 5px; }
.tree li { display: flex; align-items: center; height: 20px; position: relative; }
.lv0 { padding-left: 16px; }
.lv1 { padding-left: 35px; }
.lv2 { padding-left: 72px; }
.arrow { width: 12px; height: 14px; margin-right: 7px; }
.lv0 .arrow { margin-right: 8px; }
.pill { height: 20px; display: flex; align-items: center; background: #f0f0f0; padding: 0 8px 0 3px; }
.eye { margin-right: 6px; }
.node { height: 20px; display: flex; align-items: center; }
.node .name { margin-left: 14px; padding-top: 1px; }
.lv1 .eye + .node { margin-left: 3px; }
.lv2 .node { padding-left: 3px; }
.root .node { background: #929292; height: 16px; padding: 0 11px 0 2px; color: #fff; font-weight: 700; }
.root .pill { padding-right: 6px; }
.root input { appearance: none; width: 14px; height: 14px; margin: 0 0 0 4px; border: 1px solid #333; border-radius: 50%; background: radial-gradient(circle, #222 0 2px, #fff 3px); }
.selected .pill { padding-right: 0; }
.selected .node { background: #0d93d5; color: #fff; font-weight: 700; padding-right: 8px; }
.hatched .node::after { content: ""; position: absolute; left: 80px; width: 81px; bottom: 0; height: 5px; background: repeating-linear-gradient(120deg, #7f93b5 0 2px, transparent 2px 6px); }

.canvas-foot { display: flex; align-items: center; justify-content: space-between; padding: 0 15px 4px 4px; }
.navbar { display: flex; align-items: center; gap: 10px; height: 24px; padding: 0 3px; background: #f1f1f1; margin-right: 256px; }
.navbar button { gap: 3px; }
.navbar button:first-child, .navbar button:nth-child(5) { margin-right: -2px; }
.navbar button:nth-child(6), .navbar button:nth-child(7) { margin-right: -4px; }
.status { color: #333; }

.model { position: absolute; left: 879px; top: 211px; width: 620px; height: 470px; }
.viewcube { position: absolute; right: 2px; top: 6px; width: 115px; height: 115px; }
.notes { position: absolute; left: 0; top: 0; width: 100%; height: 100%; pointer-events: none; }
.note { position: absolute; font-size: 36px; line-height: 40px; font-weight: 700; color: #c90f14; white-space: nowrap; }
.first { left: 417px; top: 58px; }
.second { left: 489px; top: 710px; }

.context { position: absolute; left: 151px; top: 165px; width: 288px; box-sizing: border-box; border: 1px solid #777; border-radius: 3px; background: #fff; padding: 2px 4px 2px 4px; }
.context button { width: 100%; height: 23px; }
.context .tall button { height: 26px; }
.context .tall .label, .context .tall .key { padding-top: 1px; }
.context .sep { border-bottom: 1px solid #777; }
.context .active { background: #d8d8d8; }
.context .label { width: 197px; margin-left: 4px; text-align: left; white-space: nowrap; }
.context .key { width: 51px; text-align: left; }
.context .sub { width: 5px; height: 8px; }

.timeline { height: 43px; box-sizing: border-box; display: flex; background: #f1f1f1; border-top: 2px solid #c9c9c9; }
.playback { display: flex; gap: 9px; padding: 16px 0 0 9px; height: 16px; width: 133px; box-sizing: content-box; }
.playback button { height: 16px; }
.features { display: flex; position: relative; }
.features::after { content: ""; position: absolute; left: 12px; right: 12px; bottom: 1px; height: 2px; background: #c5c5c5; }
.features li { width: 24px; height: 24px; margin-top: 11px; position: relative; }
.features li::after { content: ""; position: absolute; left: 12px; top: 24px; width: 1px; height: 5px; background: #bbb; }
.features button { width: 24px; height: 24px; justify-content: center; }
.picked { background: #d4d4d4; }
.marker { width: 12px; height: 32px; margin: 9px auto 0 -6px; position: relative; }
.prefs { height: 16px; margin: 16px 13px 0 0; }

.taskbar { height: 47px; display: flex; background: #33241f; color: #fff; font-family: "Open Sans", "Noto Sans", sans-serif; }
.app { width: 55px; height: 47px; justify-content: center; box-sizing: border-box; padding-bottom: 2px; }
.start { width: 57px; padding-right: 4px; }
.fusion { width: 54px; background: #5d504a; border-bottom: 2px solid #93d5cf; padding: 0; margin-right: 5px; margin-left: 1px; }
.ps { width: 45px; border-bottom: 2px solid #93d5cf; padding: 0; }
.tray { margin-left: auto; display: flex; align-items: center; padding-right: 18px; position: relative; }
.tray > svg { fill: none; stroke: #fff; }
.t-chev { width: 14px; height: 8px; margin-right: 11px; }
.t-bat { width: 18px; height: 12px; margin-right: 10px; }
.t-wifi { width: 16px; height: 16px; margin-right: 8px; }
.t-vol { width: 20px; height: 16px; margin-right: 12px; }
.lang { font-size: 14px; width: 41px; }
time { width: 66px; text-align: center; font-size: 14px; line-height: 22px; }
.inbox { margin-left: 22px; position: relative; width: 30px; height: 30px; }
.inbox svg { width: 30px; height: 30px; }
.inbox span { position: absolute; left: 15px; top: 12px; font-size: 12px; }
</style>
